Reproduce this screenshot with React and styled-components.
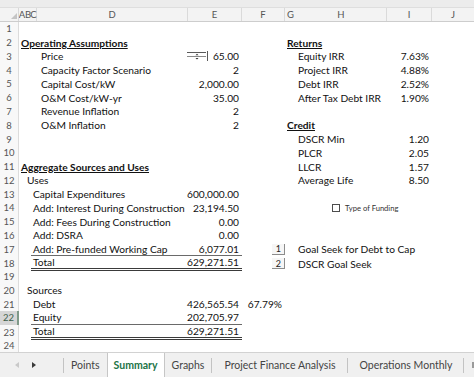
import React from "react";
import styled, { createGlobalStyle } from "styled-components";

const GlobalStyle = createGlobalStyle`
  html, body {
    margin: 0;
    padding: 0;
    background: #ffffff;
    overflow: hidden;
  }
  body {
    font-family: Lato, "Liberation Sans", sans-serif;
  }
`;

const COLS = "19px 6px 6px 6px 151px 54px 43px 11px 91px 45px 1fr";
const ROW_H = "13.77px";

const Window = styled.div`
  width: 474px;
  height: 377px;
  display: flex;
  flex-direction: column;
  overflow: hidden;
  background: #fff;
`;

const FormulaStrip = styled.div`
  height: 8px;
  flex-shrink: 0;
  background: #ececec;
  border-bottom: 1px solid #dedede;
  box-sizing: border-box;
`;

const ColumnHeads = styled.div`
  display: grid;
  grid-template-columns: ${COLS};
  height: 14px;
  flex-shrink: 0;
  background: #f3f3f3;
  border-bottom: 1px solid #cdcdcd;
  box-sizing: border-box;
`;

const Corner = styled.div`
  position: relative;
  border-right: 1px solid #d8d8d8;

  &::after {
    content: "";
    position: absolute;
    right: 1px;
    bottom: 2px;
    border-left: 6px solid transparent;
    border-bottom: 6px solid #c4c4c4;
  }
`;

const HeadCell = styled.div`
  display: flex;
  align-items: center;
  justify-content: center;
  font-size: 9.5px;
  color: #555;
  border-right: ${(p) => (p.$sep ? "1px solid #dadada" : "none")};
  overflow: visible;
  white-space: nowrap;
`;

const Sheet = styled.div`
  display: flex;
  flex-direction: column;
  flex-shrink: 0;
`;

const Row = styled.div`
  display: grid;
  grid-template-columns: ${COLS};
  height: ${ROW_H};
  font-size: 10.2px;
  color: #111;
`;

const RowNum = styled.div`
  grid-column: 1;
  display: flex;
  align-items: center;
  justify-content: center;
  font-size: 9.5px;
  color: ${(p) => (p.$active ? "#3d5e4a" : "#555")};
  background: ${(p) => (p.$active ? "#d6d6d6" : "#f8f8f8")};
  border-right: ${(p) => (p.$active ? "2px solid #7f9a89" : "1px solid #dcdcdc")};
  box-sizing: border-box;
`;

const Cell = styled.div`
  grid-column: ${(p) => p.$col} / span ${(p) => p.$span || 1};
  display: flex;
  align-items: center;
  justify-content: ${(p) => (p.$align === "right" ? "flex-end" : "flex-start")};
  padding: 0 ${(p) => (p.$align === "right" ? "3px" : "0")} 0 ${(p) => p.$pad ?? 2}px;
  font-weight: ${(p) => (p.$bold ? 700 : 400)};
  text-decoration: ${(p) => (p.$under ? "underline" : "none")};
  text-underline-offset: 1px;
  white-space: nowrap;
  box-sizing: border-box;
  min-width: 0;
  border-bottom: ${(p) =>
    p.$rule === "double"
      ? "3px double #3a3a3a"
      : p.$rule === "thin"
      ? "1px solid #6a6a6a"
      : "none"};
`;

const ValueCell = styled(Cell)`
  justify-content: space-between;
  padding-left: 0;
`;

const MacroButton = styled.div`
  width: 13px;
  height: 11px;
  display: flex;
  align-items: center;
  justify-content: flex-end;
  padding-right: 3px;
  box-sizing: border-box;
  font-size: 9px;
  color: #222;
  background: #f6f6f6;
  border-right: 1px solid #8c8c8c;
  border-bottom: 1px solid #8c8c8c;
`;

const CheckBox = styled.span`
  width: 8px;
  height: 8px;
  border: 1px solid #4d4d4d;
  box-sizing: border-box;
  margin-right: 5px;
  background: #fff;
`;

const CheckLabel = styled.span`
  font-size: 7.6px;
  color: #333;
`;

const TabBar = styled.div`
  flex: 1;
  display: flex;
  align-items: stretch;
  background: #f0f0f0;
  border-top: 1px solid #d2d2d2;
  box-sizing: border-box;
  font-size: 10.5px;
  color: #444;
  overflow: hidden;

  & > * {
    flex-shrink: 0;
  }
`;

const NavArrows = styled.div`
  width: 63px;
  display: flex;
  align-items: center;
  padding-left: 15px;
  gap: 13px;
  box-sizing: border-box;
`;

const Arrow = styled.span`
  width: 0;
  height: 0;
  border-top: 3px solid transparent;
  border-bottom: 3px solid transparent;
  ${(p) =>
    p.$left
      ? "border-right: 4px solid #c9c9c9;"
      : "border-left: 4px solid #3a3a3a;"}
`;

const TabSep = styled.span`
  width: 1px;
  align-self: center;
  height: 15px;
  background: #c3c3c3;
`;

const Tab = styled.div`
  display: flex;
  align-items: center;
  padding: 0 ${(p) => p.$pad || 7}px;
  margin-top: ${(p) => (p.$active ? "-1px" : "0")};
  background: ${(p) => (p.$active ? "#ffffff" : "transparent")};
  color: ${(p) => (p.$active ? "#217346" : "#444")};
  font-weight: ${(p) => (p.$active ? 700 : 400)};
  border-left: ${(p) => (p.$active ? "1px solid #c6c6c6" : "none")};
  border-right: ${(p) => (p.$active ? "1px solid #c6c6c6" : "none")};
  white-space: nowrap;
`;

const More = styled.span`
  margin-left: 8px;
  align-self: center;
  width: 3px;
  height: 6px;
  background: #9a9a9a;
`;

function Spinner() {
  return (
    <svg width="22" height="10" viewBox="0 0 22 10" style={{ marginLeft: -1 }}>
      <line x1="0" y1="1.5" x2="19" y2="1.5" stroke="#5a5a5a" strokeWidth="1" />
      <line x1="0" y1="5.5" x2="19" y2="5.5" stroke="#8a8a8a" strokeWidth="1" />
      <line x1="20.5" y1="0" x2="20.5" y2="10" stroke="#5a5a5a" strokeWidth="1" />
      <path d="M8.5 4.2 L10 2.8 L11.5 4.2 Z" fill="#333" />
      <path d="M8.5 7 L10 8.4 L11.5 7 Z" fill="#333" />
    </svg>
  );
}

const heads = [
  { l: "", corner: true },
  { l: "A" },
  { l: "B" },
  { l: "C", sep: true },
  { l: "D", sep: true },
  { l: "E", sep: true },
  { l: "F", sep: true },
  { l: "G", sep: false },
  { l: "H", sep: true },
  { l: "I", sep: true },
  { l: "J", sep: false },
];

// each row: list of cells {col, span, t, right, bold, under, pad, rule}
const rows = [
  [],
  [
    { col: 2, span: 4, t: "Operating Assumptions", bold: true, under: true },
    { col: 8, span: 2, t: "Returns", bold: true, under: true },
  ],
  [
    { col: 5, t: "Price", pad: 4 },
    { col: 6, t: "65.00", right: true, spin: true },
    { col: 9, t: "Equity IRR" },
    { col: 10, t: "7.63%", right: true },
  ],
  [
    { col: 5, t: "Capacity Factor Scenario", pad: 4 },
    { col: 6, t: "2", right: true },
    { col: 9, t: "Project IRR" },
    { col: 10, t: "4.88%", right: true },
  ],
  [
    { col: 5, t: "Capital Cost/kW", pad: 4 },
    { col: 6, t: "2,000.00", right: true },
    { col: 9, t: "Debt IRR" },
    { col: 10, t: "2.52%", right: true },
  ],
  [
    { col: 5, t: "O&M Cost/kW-yr", pad: 4 },
    { col: 6, t: "35.00", right: true },
    { col: 9, t: "After Tax Debt IRR" },
    { col: 10, t: "1.90%", right: true },
  ],
  [
    { col: 5, t: "Revenue Inflation", pad: 4 },
    { col: 6, t: "2", right: true },
  ],
  [
    { col: 5, t: "O&M Inflation", pad: 4 },
    { col: 6, t: "2", right: true },
    { col: 8, span: 2, t: "Credit", bold: true, under: true },
  ],
  [
    { col: 9, t: "DSCR Min" },
    { col: 10, t: "1.20", right: true },
  ],
  [
    { col: 9, t: "PLCR" },
    { col: 10, t: "2.05", right: true },
  ],
  [
    { col: 2, span: 4, t: "Aggregate Sources and Uses", bold: true, under: true },
    { col: 9, t: "LLCR" },
    { col: 10, t: "1.57", right: true },
  ],
  [
    { col: 3, span: 3, t: "Uses" },
    { col: 9, t: "Average Life" },
    { col: 10, t: "8.50", right: true },
  ],
  [
    { col: 4, span: 2, t: "Capital Expenditures" },
    { col: 6, t: "600,000.00", right: true },
  ],
  [
    { col: 4, span: 2, t: "Add: Interest During Construction" },
    { col: 6, t: "23,194.50", right: true },
    { col: 9, span: 2, check: true, t: "Type of Funding", pad: 36 },
  ],
  [
    { col: 4, span: 2, t: "Add: Fees During Construction" },
    { col: 6, t: "0.00", right: true },
  ],
  [
    { col: 4, span: 2, t: "Add: DSRA" },
    { col: 6, t: "0.00", right: true },
  ],
  [
    { col: 4, span: 2, t: "Add: Pre-funded Working Cap", rule: "thin" },
    { col: 6, t: "6,077.01", right: true, rule: "thin" },
    { col: 7, button: "1" },
    { col: 9, span: 2, t: "Goal Seek for Debt to Cap" },
  ],
  [
    { col: 4, span: 2, t: "Total", rule: "double" },
    { col: 6, t: "629,271.51", right: true, rule: "double" },
    { col: 7, button: "2" },
    { col: 9, span: 2, t: "DSCR Goal Seek" },
  ],
  [],
  [{ col: 3, span: 3, t: "Sources" }],
  [
    { col: 4, span: 2, t: "Debt" },
    { col: 6, t: "426,565.54", right: true },
    { col: 7, t: "67.79%", right: true },
  ],
  [
    { col: 4, span: 2, t: "Equity", rule: "thin" },
    { col: 6, t: "202,705.97", right: true, rule: "thin" },
  ],
  [
    { col: 4, span: 2, t: "Total", rule: "double" },
    { col: 6, t: "629,271.51", right: true, rule: "double" },
  ],
  [],
];

function renderCell(c, i) {
  if (c.button) {
    return (
      <Cell key={i} $col={c.col} $align="right" $pad={0} style={{ paddingRight: 0 }}>
        <MacroButton>{c.button}</MacroButton>
      </Cell>
    );
  }
  if (c.check) {
    return (
      <Cell key={i} $col={c.col} $span={c.span} $pad={c.pad}>
        <CheckBox />
        <CheckLabel>{c.t}</CheckLabel>
      </Cell>
    );
  }
  if (c.spin) {
    return (
      <ValueCell key={i} $col={c.col} $align="right">
        <Spinner />
        <span>{c.t}</span>
      </ValueCell>
    );
  }
  return (
    <Cell
      key={i}
      $col={c.col}
      $span={c.span}
      $align={c.right ? "right" : "left"}
      $pad={c.pad}
      $bold={c.bold}
      $under={c.under}
      $rule={c.rule}
    >
      {c.t}
    </Cell>
  );
}

const tabs = [
  { name: "Points", pad: 7 },
  { name: "Summary", active: true, pad: 6 },
  { name: "Graphs", pad: 7 },
  { name: "Project Finance Analysis", pad: 12 },
  { name: "Operations Monthly", pad: 11 },
];

export default function App() {
  return (
    <>
      <GlobalStyle />
      <Window>
        <FormulaStrip />
        <ColumnHeads>
          {heads.map((h, i) =>
            h.corner ? (
              <Corner key={i} />
            ) : (
              <HeadCell key={i} $sep={h.sep}>
                {h.l}
              </HeadCell>
            )
          )}
        </ColumnHeads>
        <Sheet>
          {rows.map((cells, r) => (
            <Row key={r}>
              <RowNum $active={r + 1 === 22}>{r + 1}</RowNum>
              {cells.map(renderCell)}
            </Row>
          ))}
        </Sheet>
        <TabBar>
          <NavArrows>
            <Arrow $left />
            <Arrow />
          </NavArrows>
          <TabSep />
          {tabs.map((t, i) => (
            <React.Fragment key={t.name}>
              <Tab $active={t.active} $pad={t.pad}>
                {t.name}
              </Tab>
              {!t.active && tabs[i + 1] && !tabs[i + 1].active && <TabSep />}
              {!tabs[i + 1] && <TabSep />}
            </React.Fragment>
          ))}
          <More />
        </TabBar>
      </Window>
    </>
  );
}
